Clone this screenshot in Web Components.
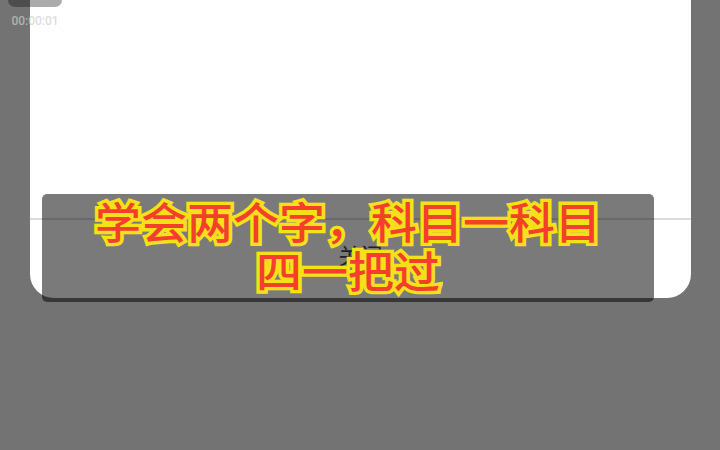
<!DOCTYPE html>
<html lang="zh">
<head>
<meta charset="utf-8">
<style>
    html, body { margin: 0; height: 100%; background: #737373; overflow: hidden; }
    body { font-family: "Liberation Sans", "Noto Sans CJK SC", sans-serif; }
</style>
</head>
<body>
<video-frame>
    <dialog-card slot="dialog" action="关闭"></dialog-card>
    <time-badge slot="badge" time="00:00:01"></time-badge>
    <sub-title slot="caption">
        <span>学会两个字，科目一科目</span>
        <span>四一把过</span>
    </sub-title>
</video-frame>
<script>
class VideoFrame extends HTMLElement {
    constructor() {
        super();
        this.attachShadow({ mode: 'open' });
        this.shadowRoot.innerHTML = `
            <style>
                :host {
                    display: block;
                    position: relative;
                    width: 720px;
                    height: 450px;
                    background: #737373;
                    overflow: hidden;
                }
                .stage { padding-left: 30px; width: 661px; }
            </style>
            <div class="stage"><slot name="dialog"></slot></div>
            <slot name="badge"></slot>
            <slot name="caption"></slot>
        `;
    }
}

class DialogCard extends HTMLElement {
    constructor() {
        super();
        this.attachShadow({ mode: 'open' });
    }

    connectedCallback() {
        const action = this.getAttribute('action');
        this.shadowRoot.innerHTML = `
            <style>
                :host {
                    display: flex;
                    flex-direction: column;
                    height: 298px;
                    background: #fff;
                    border-radius: 0 0 24px 24px;
                }
                .body { height: 218px; border-bottom: 2px solid #dcdcdc; }
                .action {
                    flex: 1;
                    display: flex;
                    justify-content: center;
                    padding-top: 19px;
                    font: 400 22px/30px "Noto Sans CJK SC", sans-serif;
                    color: #444;
                }
            </style>
            <div class="body"></div>
            <div class="action">${action}</div>
        `;
    }
}

class TimeBadge extends HTMLElement {
    constructor() {
        super();
        this.attachShadow({ mode: 'open' });
    }

    connectedCallback() {
        const time = this.getAttribute('time');
        this.shadowRoot.innerHTML = `
            <style>
                :host {
                    position: absolute;
                    left: 8px;
                    top: 0;
                    width: 54px;
                    display: flex;
                    flex-direction: column;
                    align-items: center;
                }
                .pill {
                    width: 54px;
                    height: 7px;
                    background: rgba(0, 0, 0, .33);
                    border-radius: 0 0 9px 9px;
                }
                .time {
                    margin-top: 8px;
                    font: 500 12px/13px "Roboto", "Liberation Sans", sans-serif;
                    color: rgba(205, 205, 205, .7);
                    white-space: nowrap;
                }
            </style>
            <div class="pill"></div>
            <div class="time">${time}</div>
        `;
    }
}

class SubTitle extends HTMLElement {
    constructor() {
        super();
        this.attachShadow({ mode: 'open' });
        this.shadowRoot.innerHTML = `
            <style>
                :host {
                    position: absolute;
                    left: 42px;
                    top: 194px;
                    width: 612px;
                    height: 108px;
                    box-sizing: border-box;
                    padding-top: 2px;
                    display: flex;
                    flex-direction: column;
                    align-items: center;
                    background: rgba(0, 0, 0, .52);
                    border-radius: 5px;
                }
                ::slotted(span) {
                    font: 500 46px/49px "Noto Sans CJK SC", sans-serif;
                    color: #f4402a;
                    -webkit-text-stroke: 7px #f6e01a;
                    paint-order: stroke fill;
                    white-space: nowrap;
                    transform: scaleY(.95);
                }
            </style>
            <slot></slot>
        `;
    }
}

customElements.define('video-frame', VideoFrame);
customElements.define('dialog-card', DialogCard);
customElements.define('time-badge', TimeBadge);
customElements.define('sub-title', SubTitle);
</script>
</body>
</html>
